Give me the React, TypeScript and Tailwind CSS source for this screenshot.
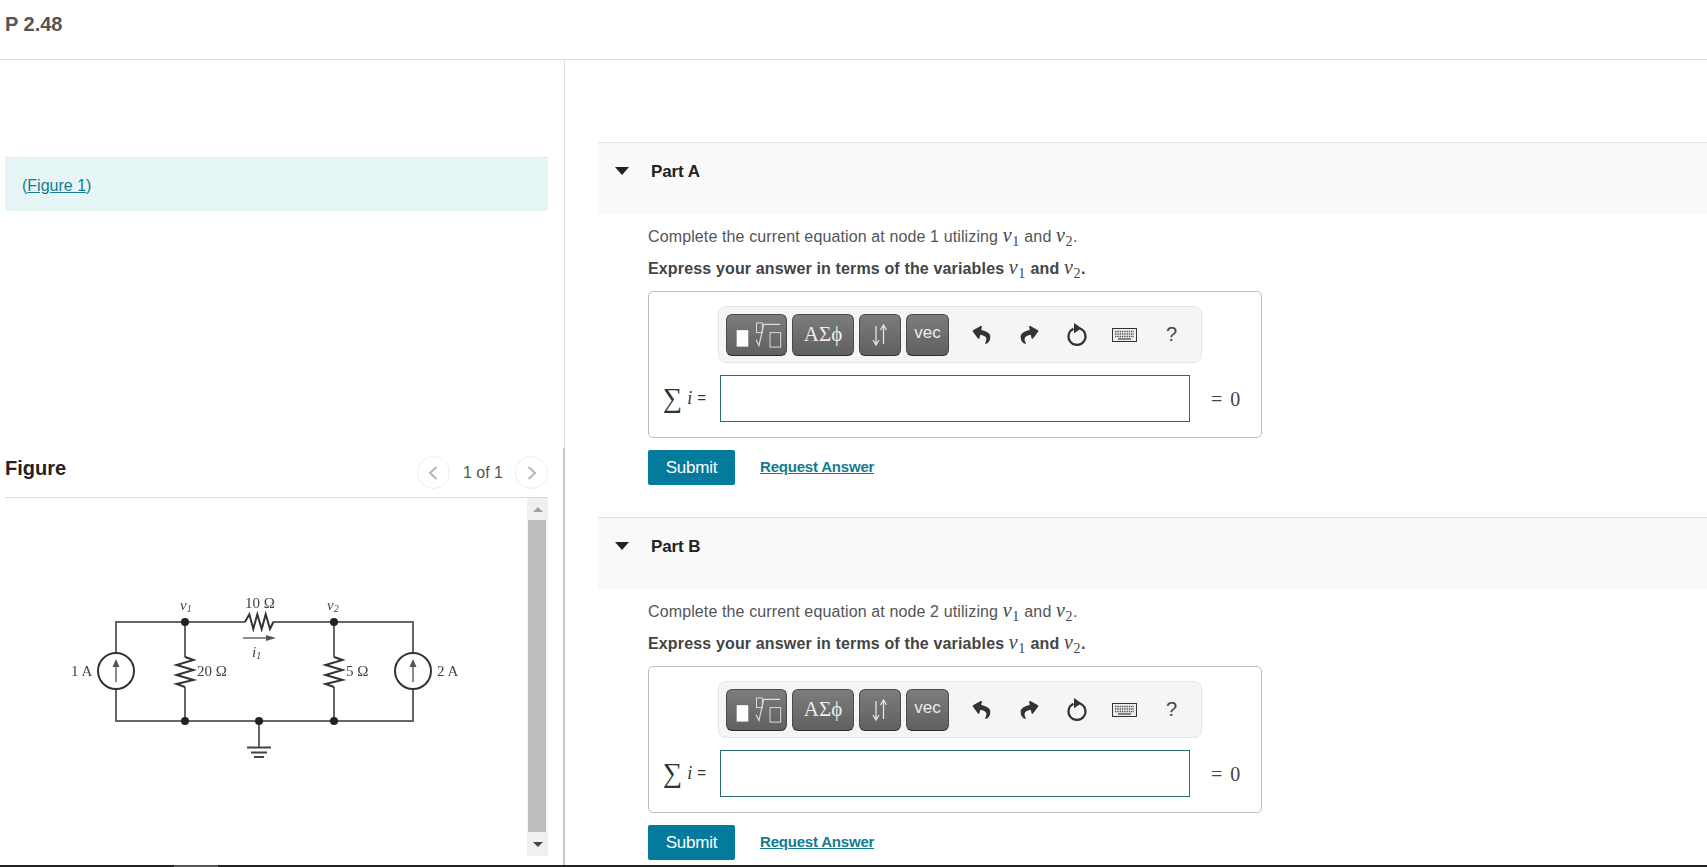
import { FaReply, FaShare } from "react-icons/fa";

const sans = "font-['Liberation_Sans',Arial,sans-serif]";
const serif = "font-['Liberation_Serif','Times_New_Roman',serif]";

function V({ n }: { n: number }) {
  return (
    <span className={`${serif} text-[20px] leading-none font-normal text-[#444] tracking-[0.6px]`}>
      <i>v</i>
      <sub className="text-[14px]">{n}</sub>
    </span>
  );
}

function ToolButton({ className, children }: { className: string; children: React.ReactNode }) {
  return (
    <div
      className={`h-[42px] flex items-center justify-center rounded-[6px] border border-[#4a4a4a] border-b-[#2d2d2d] bg-linear-to-b from-[#7c7c7c] to-[#606060] text-[#ececec] ${className}`}
    >
      {children}
    </div>
  );
}

function Toolbar() {
  return (
    <div className="ml-[69px] w-[484px] h-[57px] flex items-center pl-[7px] rounded-[8px] border border-[#e6e6e6] bg-[#f5f5f5]">
      <ToolButton className="w-[61px]">
        <svg width="61" height="42" viewBox="0 0 61 42">
          <rect x="10" y="16" width="12" height="17" fill="#fff" />
          <rect x="30.5" y="8.5" width="6" height="10" fill="none" stroke="#ddd" />
          <path d="M30 26l3 6 5-22h17" fill="none" stroke="#ddd" strokeWidth="1.2" />
          <rect x="44.5" y="18.5" width="11" height="15" fill="none" stroke="#ddd" />
        </svg>
      </ToolButton>
      <ToolButton className={`w-[62px] ml-[5px] ${serif} text-[21px]`}>ΑΣϕ</ToolButton>
      <ToolButton className="w-[42px] ml-[5px]">
        <svg width="20" height="24" viewBox="0 0 20 24" fill="none" stroke="#e4e4e4" strokeWidth="1.3">
          <path d="M6 3v18M3 17l3 5 3-5" />
          <path d="M13.5 21V3M10.5 7l3-5 3 5" />
        </svg>
      </ToolButton>
      <ToolButton className={`w-[43px] ml-[5px] ${sans} text-[17px] pb-[3px]`}>vec</ToolButton>
      <FaReply size={19} className="ml-[23px] text-[#333] rotate-[12deg]" />
      <FaShare size={19} className="ml-[29px] text-[#333] -rotate-[12deg]" />
      <svg className="ml-[27px]" width="22" height="25" viewBox="0 0 22 25" fill="none">
        <path d="M14 6.500a8.500 8.500 0 1 1-6.500 .2" stroke="#333" strokeWidth="2.200" />
        <path d="M8 1l7.500 5.200-7.500 5z" fill="#333" />
      </svg>
      <svg className="ml-[24px]" width="25" height="16" viewBox="0 0 25 16">
        <rect x="0.5" y="1.5" width="24" height="13" fill="#eee" stroke="#333" />
        <path d="M3 4.500h19M3 7h19M3 9.500h19" stroke="#555" strokeWidth="1.4" strokeDasharray="1.4 0.9" />
        <path d="M6 12h13" stroke="#555" strokeWidth="1.4" />
      </svg>
      <span className={`ml-[29px] ${sans} text-[20px] text-[#444] -mt-[2px]`}>?</span>
    </div>
  );
}

function Part({ label, node }: { label: string; node: number }) {
  return (
    <section className="h-[375px] shrink-0">
      <div className="h-[72px] border-t border-[#e0e0e0] bg-[#f9f9f9] flex items-start pt-[17px]">
        <div className="ml-[17px] mt-[7px] w-0 h-0 border-x-[7px] border-x-transparent border-t-[8px] border-t-[#222]" />
        <h3 className="ml-[22px] text-[17px] leading-[24px] font-bold text-[#222] tracking-[-0.1px]">{label}</h3>
      </div>
      <div className="pl-[50px] w-[666px]">
        <p className="mt-[11px] h-[24px] leading-[24px] text-[16px] text-[#555] whitespace-nowrap tracking-[0.12px]">
          Complete the current equation at node {node} utilizing <V n={1} /> and <V n={2} />.
        </p>
        <p className="mt-[8px] h-[24px] leading-[24px] text-[16px] font-bold text-[#444] whitespace-nowrap tracking-[0.15px]">
          Express your answer in terms of the variables <V n={1} /> and <V n={2} />.
        </p>
        <div className="mt-[10px] h-[147px] w-[614px] rounded-[5px] border border-[#bdbdbd] pt-[14px]">
          <Toolbar />
          <div className="mt-[12px] flex items-center">
            <div className={`w-[71px] pl-[14px] flex items-center ${serif} text-[#333]`}>
              <span className="text-[27px] leading-none">∑</span>
              <i className="ml-[5px] text-[18px]">i</i>
              <span className={`ml-[5px] text-[15px] ${sans}`}>=</span>
            </div>
            <div className="w-[470px] h-[47px] border border-[#2b6c7a] bg-white" />
            <span className={`ml-[21px] flex gap-[8px] ${serif} text-[20px] text-[#444]`}>
              <span>=</span>
              <span>0</span>
            </span>
          </div>
        </div>
        <div className="mt-[12px] flex items-center">
          <button className="w-[87px] h-[35px] rounded-[2px] bg-[#047b9c] text-white text-[17px] font-medium tracking-[-0.2px]">
            Submit
          </button>
          <a className="ml-[25px] text-[15px] font-bold text-[#137c90] underline tracking-[-0.2px]">Request Answer</a>
        </div>
      </div>
    </section>
  );
}

function Circuit() {
  const txt = { fontFamily: "'Liberation Serif', serif", fill: "#444" };
  return (
    <svg className="shrink-0 blur-[0.3px]" width="522" height="358" viewBox="5 498 522 358">
      <g fill="none" stroke="#666" strokeWidth="2">
        <path d="M245 622H116V653M116 689V721H413V689M413 653V622H273" />
        <path d="M185 622V657M185 687V721M334 622V657M334 687V721M259 721V747" />
      </g>
      <g fill="none" stroke="#333" strokeWidth="2">
        <circle cx="116" cy="671" r="18" />
        <circle cx="413" cy="671" r="18" />
        <path d="M245 622L249.300 614.300 253.300 629 257.300 614.300 261.700 629 265.700 614.300 270 629 273.300 622" />
        <path d="M185 657l8.500 3-17 5 17 5-17 5 17 5-17 4 8.500 3" />
        <path d="M334 657l8.500 3-17 5 17 5-17 5 17 5-17 4 8.500 3" />
      </g>
      <g stroke="#666" strokeWidth="1.5" fill="#555">
        <path d="M116 682V664M413 682V664M243 638H272" fill="none" />
        <path d="M116 659l-3.500 8h7zM413 659l-3.500 8h7zM276 638l-10-3v6z" stroke="none" />
      </g>
      <g fill="#222">
        <circle cx="185" cy="622" r="4" />
        <circle cx="334" cy="622" r="4" />
        <circle cx="185" cy="721" r="4" />
        <circle cx="259" cy="721" r="4" />
        <circle cx="334" cy="721" r="4" />
      </g>
      <path d="M247 747.500h24M251 752.500h16M254 757h10" stroke="#444" strokeWidth="2" />
      <g fontSize="15" style={txt}>
        <text x="71" y="676">1 A</text>
        <text x="197" y="676">20 Ω</text>
        <text x="346" y="676">5 Ω</text>
        <text x="437" y="676">2 A</text>
        <text x="245" y="608">10 Ω</text>
        <text x="180" y="610" fontStyle="italic">v<tspan fontSize="10" dy="2">1</tspan></text>
        <text x="327" y="610" fontStyle="italic">v<tspan fontSize="10" dy="2">2</tspan></text>
        <text x="252" y="657" fontStyle="italic">i<tspan fontSize="10" dy="2">1</tspan></text>
      </g>
    </svg>
  );
}

function Pager() {
  return (
    <div className="flex items-center text-[16px] text-[#555]">
      <div className="w-[33px] h-[33px] rounded-full border border-[#ededed] flex items-center justify-center text-[#b5b5b5]">
        <svg width="12" height="16" viewBox="0 0 12 16" fill="none" stroke="currentColor" strokeWidth="2">
          <path d="M9.500 2L3 8l6.500 6" />
        </svg>
      </div>
      <span className="ml-[13px] mr-[12px]">1 of 1</span>
      <div className="w-[33px] h-[33px] rounded-full border border-[#ededed] flex items-center justify-center text-[#b5b5b5]">
        <svg width="12" height="16" viewBox="0 0 12 16" fill="none" stroke="currentColor" strokeWidth="2">
          <path d="M2.500 2L9 8l-6.500 6" />
        </svg>
      </div>
    </div>
  );
}

function Scrollbar() {
  return (
    <div className="w-[21px] h-[358px] flex flex-col bg-[#f7f7f7]">
      <div className="h-[22px] bg-[#f0f0f0] flex items-center justify-center">
        <div className="w-0 h-0 border-x-[5px] border-x-transparent border-b-[5px] border-b-[#a0a0a0]" />
      </div>
      <div className="flex-1 ml-[1px] mr-[2px] bg-[#bdbdbd]" />
      <div className="h-[24px] bg-[#f0f0f0] flex items-center justify-center">
        <div className="w-0 h-0 border-x-[5px] border-x-transparent border-t-[5px] border-t-[#444]" />
      </div>
    </div>
  );
}

export default function App() {
  return (
    <div className={`h-[867px] w-[1707px] overflow-hidden flex flex-col bg-white ${sans}`}>
      {/* Title */}
      <header className="h-[60px] shrink-0 border-b border-[#dddddd] pl-[5px] pt-[12px]">
        <h1 className="text-[20px] leading-[24px] font-bold text-[#555]">P 2.48</h1>
      </header>

      <div className="flex-1 min-h-0 flex">
        {/* Left column */}
        <div className="w-[565px] shrink-0 flex flex-col">
          <div className="h-[388px] shrink-0 border-r border-[#dddddd] pt-[97px] pl-[5px] pr-[16px]">
            <div className="h-[54px] border-t border-[#dcecec] bg-[#e6f5f5] pl-[17px] pt-[2px] flex items-center text-[16px] text-[#137c90]">
              (<a className="underline">Figure 1</a>)
            </div>
          </div>
          <div className="flex-1 min-h-0 border-r-2 border-[#c5c9cb] pl-[5px] pr-[15px]">
            <div className="h-[50px] border-b border-[#d9d9d9] flex items-center justify-between">
              <h2 className="text-[20px] font-bold text-[#222] -mt-[10px]">Figure</h2>
              <Pager />
            </div>
            <div className="flex">
              <Circuit />
              <Scrollbar />
            </div>
          </div>
        </div>

        {/* Right column */}
        <div className="flex-1 min-w-0 pl-[33px] pt-[82px] flex flex-col overflow-hidden">
          <Part label="Part A" node={1} />
          <Part label="Part B" node={2} />
        </div>
      </div>

      <div className="h-[2px] shrink-0 bg-[#222] flex">
        <div className="ml-[174px] w-[44px] bg-[#555]" />
      </div>
    </div>
  );
}
